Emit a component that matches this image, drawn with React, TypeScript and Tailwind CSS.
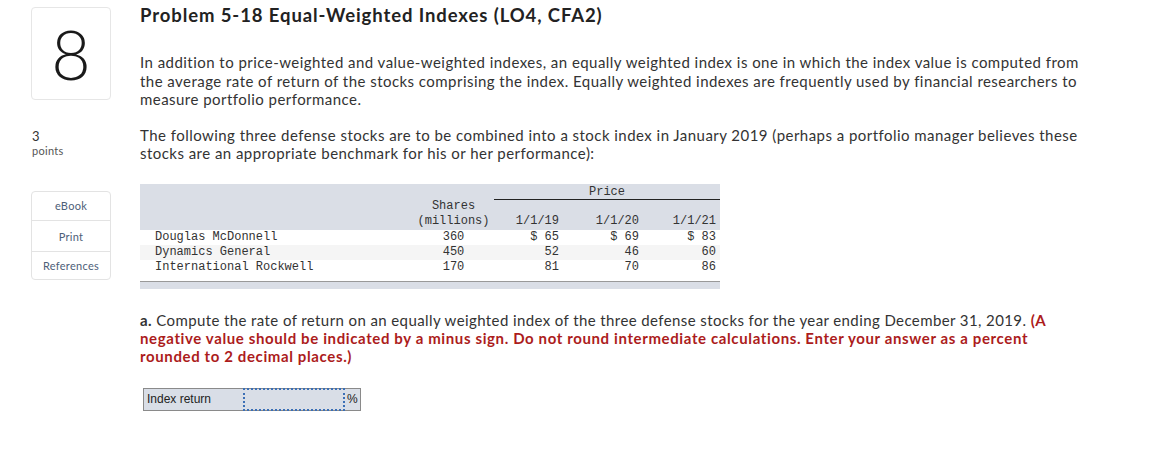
import React from "react"

const rows = [
  { name: "Douglas McDonnell", shares: "360", p19: "$ 65", p20: "$ 69", p21: "$ 83" },
  { name: "Dynamics General", shares: "450", p19: "52", p20: "46", p21: "60" },
  { name: "International Rockwell", shares: "170", p19: "81", p20: "70", p21: "86" },
]

function SideColumn() {
  return (
    <div className="w-[140px] shrink-0 pl-[31px] pt-[7px]">
      <div className="flex h-[93px] w-[80px] items-center justify-center rounded-[4px] border border-[#e6e6e6]">
        <span className="text-[68px] font-light leading-none text-[#1a1a1a]">8</span>
      </div>
      <div className="mt-[28px] pl-[1px] text-[#333]">
        <div className="text-[13px] leading-[16px]">3</div>
        <div className="text-[11px] leading-[14px] tracking-[0.3px] text-[#555]">points</div>
      </div>
      <div className="mt-[33px] w-[80px] overflow-hidden rounded-[4px] border border-[#e3e3e3] text-center text-[11px] tracking-[0.3px] text-[#4d6078]">
        <div className="h-[28px] leading-[28px]">eBook</div>
        <div className="h-[31px] border-t border-[#e3e3e3] leading-[31px]">Print</div>
        <div className="h-[28px] border-t border-[#e3e3e3] leading-[28px]">References</div>
      </div>
    </div>
  )
}

function StockTable() {
  return (
    <div className="mt-[21px] w-[580px] font-['Liberation_Mono',monospace] text-[12px] text-[#333]">
      {/* header block */}
      <div className="grid grid-cols-[275px_77px_67px_80px_77px_4px] grid-rows-[16px_30px] bg-[#dadee6]">
        <div className="col-start-2 row-span-2 row-start-1 flex flex-col items-center justify-end pb-[1px] leading-[15px]">
          <span>Shares</span>
          <span>(millions)</span>
        </div>
        <div className="col-span-4 col-start-3 row-start-1 ml-[2px] border-b border-[#222] pt-[1px] text-center leading-[14px]">
          Price
        </div>
        <div className="col-start-3 row-start-2 self-end pb-[1px] text-right leading-[15px]">1/1/19</div>
        <div className="col-start-4 row-start-2 self-end pb-[1px] text-right leading-[15px]">1/1/20</div>
        <div className="col-start-5 row-start-2 self-end pb-[1px] text-right leading-[15px]">1/1/21</div>
      </div>
      {rows.map((r, i) => (
        <div
          key={r.name}
          className={
            "grid h-[15px] grid-cols-[275px_77px_67px_80px_77px_4px] leading-[15px] " +
            (i === 1 ? "bg-[#f5f5f5]" : "bg-white")
          }
        >
          <div className="pl-[15px]">{r.name}</div>
          <div className="text-center">{r.shares}</div>
          <div className="text-right">{r.p19}</div>
          <div className="text-right">{r.p20}</div>
          <div className="text-right">{r.p21}</div>
        </div>
      ))}
      <div className="mt-[6px] h-[8px] border-t border-[#999] bg-[#dadee6]" />
    </div>
  )
}

export default function App() {
  return (
    <div className="h-[460px] w-[1174px] overflow-hidden bg-white font-['Lato',sans-serif]">
      <div className="flex">
        <SideColumn />
        <div className="w-[950px] pt-[3px] text-[#333]">
          <h1 className="text-[18.5px] font-bold leading-[24px] tracking-[0.9px] text-[#222]">
            Problem 5-18 Equal-Weighted Indexes (LO4, CFA2)
          </h1>
          <p className="mt-[26px] text-[15px] leading-[18.5px] tracking-[0.46px]">
            In addition to price-weighted and value-weighted indexes, an equally weighted index is one in which the
            index value is computed from the average rate of return of the stocks comprising the index. Equally
            weighted indexes are frequently used by financial researchers to measure portfolio performance.
          </p>
          <p className="mt-[17px] text-[15px] leading-[18.5px] tracking-[0.46px]">
            The following three defense stocks are to be combined into a stock index in January 2019 (perhaps a
            portfolio manager believes these stocks are an appropriate benchmark for his or her performance):
          </p>
          <StockTable />
          <p className="mt-[22px] w-[920px] text-[15px] leading-[18px] tracking-[0.4px]">
            <span className="font-bold">a.</span> Compute the rate of return on an equally weighted index of the three
            defense stocks for the year ending December 31, 2019.{" "}
            <span className="font-bold tracking-[0.62px] text-[#ac1c1c]">
              (A negative value should be indicated by a minus sign. Do not round intermediate calculations. Enter
              your answer as a percent rounded to 2 decimal places.)
            </span>
          </p>
          <div className="ml-[3px] mt-[23px] flex h-[23px] w-[218px] items-stretch border border-[#8a8a8a] bg-[#d9dee7] font-['Liberation_Sans',Arial,sans-serif] text-[12px] text-[#222]">
            <div className="flex w-[99px] items-center pl-[3px]">Index return</div>
            <div className="my-[-1px] w-[102px] border-2 border-dotted border-[#3b6fb6]" />
            <div className="flex flex-1 items-center pl-[2px]">%</div>
          </div>
        </div>
      </div>
    </div>
  )
}
